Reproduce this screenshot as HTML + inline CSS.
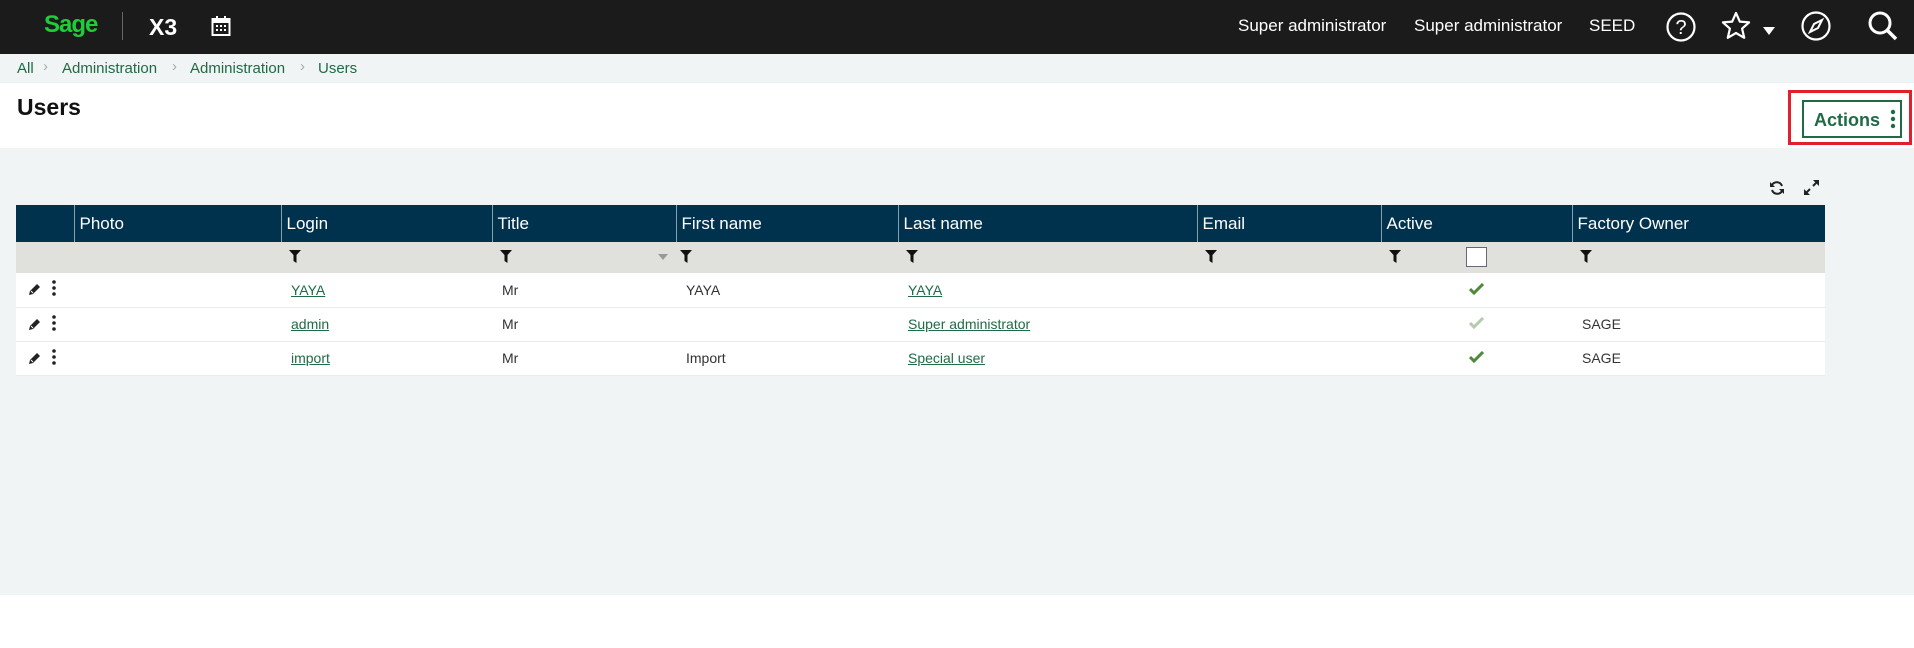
<!DOCTYPE html>
<html><head><style>
*{box-sizing:border-box;margin:0;padding:0}
body{width:1914px;height:648px;background:#fff;font-family:"Liberation Sans",sans-serif;position:relative;overflow:hidden}
.top{position:absolute;left:0;top:0;width:1914px;height:54px;background:#1b1b1b;color:#fff}
.a{position:absolute}
.n{font-family:"Liberation Sans Narrow","Liberation Sans",sans-serif}
.crumb{position:absolute;top:54px;left:0;width:1914px;height:29px;background:#f1f4f4;font-size:15px;color:#1e6b46}
.hdr{position:absolute;top:83px;left:0;width:1914px;height:65px;background:#fff;box-shadow:0 2px 3px rgba(0,0,0,.25)}
.content{position:absolute;top:148px;left:0;width:1914px;height:447px;background:#f1f4f4}
table{position:absolute;left:16px;top:205px;width:1809px;border-collapse:collapse;font-size:14px}
th{background:#00324d;color:#fff;font-weight:normal;text-align:left;height:37px;padding-left:5px;font-size:17px;border-left:1px solid #8aa0ad}
th:first-child{border-left:none}
tr.f td{background:#e0e0dc;height:31px;padding-left:8px}
tr.r td{background:#fff;height:34px;border-bottom:1px solid #e8ecec;padding-left:10px;color:#333}
a{color:#1e6b46;text-decoration:underline}
.fi{display:inline-block;width:12px;height:13px}
</style></head><body>
<div class="top">
 <div class="a" style="left:44px;top:11px;color:#1fcc39;font-size:24px;font-weight:bold;letter-spacing:-1px">Sage</div>
 <div class="a" style="left:122px;top:12px;width:1px;height:28px;background:#666"></div>
 <div class="a" style="left:149px;top:14px;font-size:23px;font-weight:bold">X3</div>
 <svg class="a" style="left:211px;top:15px" width="20" height="22" viewBox="0 0 20 22"><rect x="1.5" y="4" width="17" height="16" fill="none" stroke="#fff" stroke-width="2"/><rect x="1.5" y="4" width="17" height="4" fill="#fff"/><rect x="5" y="1" width="2" height="5" fill="#fff"/><rect x="13" y="1" width="2" height="5" fill="#fff"/><g fill="#fff"><rect x="5" y="10" width="2" height="2"/><rect x="9" y="10" width="2" height="2"/><rect x="13" y="10" width="2" height="2"/><rect x="5" y="14" width="2" height="2"/><rect x="9" y="14" width="2" height="2"/><rect x="13" y="14" width="2" height="2"/></g></svg>
 <div class="a n" style="left:1238px;top:16px;font-size:17px">Super administrator</div>
 <div class="a n" style="left:1414px;top:16px;font-size:17px">Super administrator</div>
 <div class="a n" style="left:1589px;top:16px;font-size:17px">SEED</div>
 <svg class="a" style="left:1665px;top:11px" width="32" height="32" viewBox="0 0 32 32"><circle cx="16" cy="16" r="13.5" fill="none" stroke="#fff" stroke-width="2.2"/><text x="16" y="23" text-anchor="middle" fill="#fff" font-size="20" font-family="Liberation Sans">?</text></svg>
 <svg class="a" style="left:1720px;top:10px" width="32" height="32" viewBox="0 0 32 32"><path d="M16 3l3.8 8.6 9.3.8-7 6.2 2.1 9.2L16 23l-8.2 4.8 2.1-9.2-7-6.2 9.3-.8z" fill="none" stroke="#fff" stroke-width="2.2" stroke-linejoin="round"/></svg>
 <svg class="a" style="left:1763px;top:27px" width="12" height="8"><path d="M0 0h12L6 8z" fill="#fff"/></svg>
 <svg class="a" style="left:1800px;top:10px" width="32" height="32" viewBox="0 0 32 32"><circle cx="16" cy="16" r="13.5" fill="none" stroke="#fff" stroke-width="2.2"/><path d="M22 10l-4 8-8 4 4-8z" fill="none" stroke="#fff" stroke-width="2"/></svg>
 <svg class="a" style="left:1866px;top:9px" width="34" height="34" viewBox="0 0 34 34"><circle cx="14" cy="14" r="10" fill="none" stroke="#fff" stroke-width="3"/><path d="M21 21l9 9" stroke="#fff" stroke-width="3.5"/></svg>
</div>
<div class="crumb">
 <span class="a" style="left:17px;top:6px">All</span>
 <span class="a" style="left:43px;top:4px;color:#aaa">&#x203A;</span>
 <span class="a" style="left:62px;top:6px">Administration</span>
 <span class="a" style="left:172px;top:4px;color:#aaa">&#x203A;</span>
 <span class="a" style="left:190px;top:6px">Administration</span>
 <span class="a" style="left:300px;top:4px;color:#aaa">&#x203A;</span>
 <span class="a" style="left:318px;top:6px">Users</span>
</div>
<div class="hdr">
 <div class="a" style="left:17px;top:11px;font-size:23px;font-weight:bold;color:#111">Users</div>
 <div class="a" style="left:1788px;top:7px;width:124px;height:55px;border:3px solid #e0202c"></div>
 <div class="a" style="left:1802px;top:17px;width:100px;height:38px;border:2px solid #1e6b46;color:#1e6b46;font-weight:bold;font-size:18px;padding:8px 0 0 10px" class="n">Actions</div>
 <svg class="a" style="left:1890px;top:26px" width="6" height="22"><circle cx="3" cy="3" r="2.2" fill="#1e6b46"/><circle cx="3" cy="10" r="2.2" fill="#1e6b46"/><circle cx="3" cy="17" r="2.2" fill="#1e6b46"/></svg>
</div>
<div class="content">
 <svg class="a" style="left:1769px;top:32px" width="16" height="16" viewBox="0 0 16 16"><path d="M13 6A5.5 5.5 0 0 0 3 5M3 10a5.5 5.5 0 0 0 10 1" fill="none" stroke="#222" stroke-width="2"/><path d="M1 2v5h5zM15 14v-5h-5z" fill="#222"/></svg>
 <svg class="a" style="left:1803px;top:31px" width="17" height="17" viewBox="0 0 17 17"><path d="M10 1h6v6zM7 16H1v-6z" fill="#222"/><path d="M15 2l-5 5M2 15l5-5" stroke="#222" stroke-width="2"/></svg>
</div>
<table>
<colgroup><col style="width:58px"><col style="width:207px"><col style="width:211px"><col style="width:184px"><col style="width:222px"><col style="width:299px"><col style="width:184px"><col style="width:191px"><col style="width:253px"></colgroup>
<tr><th></th><th>Photo</th><th>Login</th><th>Title</th><th>First name</th><th>Last name</th><th>Email</th><th>Active</th><th>Factory Owner</th></tr>
<tr class="f"><td></td><td></td>
<td><svg class="fi" viewBox="0 0 12 13"><path d="M0 0h12L7.5 5v8L4.5 11V5z" fill="#111"/></svg></td>
<td style="position:relative"><svg class="fi" viewBox="0 0 12 13"><path d="M0 0h12L7.5 5v8L4.5 11V5z" fill="#111"/></svg><svg style="position:absolute;right:8px;top:12px" width="10" height="6"><path d="M0 0h10L5 6z" fill="#999"/></svg></td>
<td style="padding-left:4px"><svg class="fi" viewBox="0 0 12 13"><path d="M0 0h12L7.5 5v8L4.5 11V5z" fill="#111"/></svg></td>
<td><svg class="fi" viewBox="0 0 12 13"><path d="M0 0h12L7.5 5v8L4.5 11V5z" fill="#111"/></svg></td>
<td><svg class="fi" viewBox="0 0 12 13"><path d="M0 0h12L7.5 5v8L4.5 11V5z" fill="#111"/></svg></td>
<td style="position:relative"><svg class="fi" viewBox="0 0 12 13"><path d="M0 0h12L7.5 5v8L4.5 11V5z" fill="#111"/></svg><span style="position:absolute;left:85px;top:5px;width:21px;height:20px;background:#fff;border:1px solid #667"></span></td>
<td><svg class="fi" viewBox="0 0 12 13"><path d="M0 0h12L7.5 5v8L4.5 11V5z" fill="#111"/></svg></td></tr>
<tr class="r"><td style="padding-left:12px"><svg width="14" height="14" viewBox="0 0 14 14"><path d="M1 13l1-4 7-7 3 3-7 7z" fill="#222"/><path d="M3 9l2 2" stroke="#fff" stroke-width="1"/></svg><svg style="margin-left:10px" width="4" height="16"><circle cx="2" cy="2" r="1.8" fill="#222"/><circle cx="2" cy="8" r="1.8" fill="#222"/><circle cx="2" cy="14" r="1.8" fill="#222"/></svg></td><td></td><td><a>YAYA</a></td><td>Mr</td><td>YAYA</td><td><a>YAYA</a></td><td></td><td style="padding-left:88px"><svg width="15" height="12" viewBox="0 0 15 12"><path d="M1 6l4 4 9-9" fill="none" stroke="#4f8a3a" stroke-width="3"/></svg></td><td></td></tr>
<tr class="r"><td style="padding-left:12px"><svg width="14" height="14" viewBox="0 0 14 14"><path d="M1 13l1-4 7-7 3 3-7 7z" fill="#222"/><path d="M3 9l2 2" stroke="#fff" stroke-width="1"/></svg><svg style="margin-left:10px" width="4" height="16"><circle cx="2" cy="2" r="1.8" fill="#222"/><circle cx="2" cy="8" r="1.8" fill="#222"/><circle cx="2" cy="14" r="1.8" fill="#222"/></svg></td><td></td><td><a>admin</a></td><td>Mr</td><td></td><td><a>Super administrator</a></td><td></td><td style="padding-left:88px"><svg width="15" height="12" viewBox="0 0 15 12"><path d="M1 6l4 4 9-9" fill="none" stroke="#b5cbad" stroke-width="3"/></svg></td><td>SAGE</td></tr>
<tr class="r"><td style="padding-left:12px"><svg width="14" height="14" viewBox="0 0 14 14"><path d="M1 13l1-4 7-7 3 3-7 7z" fill="#222"/><path d="M3 9l2 2" stroke="#fff" stroke-width="1"/></svg><svg style="margin-left:10px" width="4" height="16"><circle cx="2" cy="2" r="1.8" fill="#222"/><circle cx="2" cy="8" r="1.8" fill="#222"/><circle cx="2" cy="14" r="1.8" fill="#222"/></svg></td><td></td><td><a>import</a></td><td>Mr</td><td>Import</td><td><a>Special user</a></td><td></td><td style="padding-left:88px"><svg width="15" height="12" viewBox="0 0 15 12"><path d="M1 6l4 4 9-9" fill="none" stroke="#4f8a3a" stroke-width="3"/></svg></td><td>SAGE</td></tr>
</table>
</body></html>
